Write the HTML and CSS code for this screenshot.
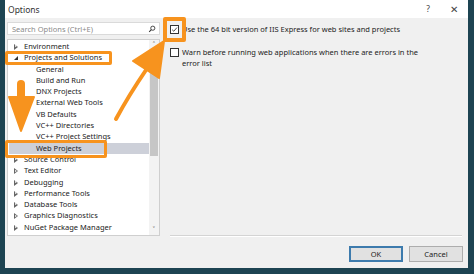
FILE: index.html
```html
<!DOCTYPE html>
<html lang="en">
<head>
  <meta charset="UTF-8" />
  <title>Options</title>
  <link rel="stylesheet" href="styles.css">
</head>
<body>
  <div class="window">
    <div class="titlebar">
      <span class="title">Options</span>
      <span class="title-btns"><span>?</span><span class="close">✕</span></span>
    </div>

    <div class="main">
      <div class="left">
        <div class="search">
          <span>Search Options (Ctrl+E)</span>
          <svg viewBox="0 0 10 10"><circle cx="6" cy="4" r="2.6" fill="none" stroke="#333" stroke-width="1.1"/><path d="M4.2 5.8L1.5 8.5" stroke="#333" stroke-width="1.3"/></svg>
        </div>
        <div class="tree">
          <div class="tree-items">
            <div class="node"><i class="tri"></i>Environment</div>
            <div class="node"><i class="tri open"></i>Projects and Solutions</div>
            <div class="node child">General</div>
            <div class="node child">Build and Run</div>
            <div class="node child">DNX Projects</div>
            <div class="node child">External Web Tools</div>
            <div class="node child">VB Defaults</div>
            <div class="node child">VC++ Directories</div>
            <div class="node child">VC++ Project Settings</div>
            <div class="node child selected">Web Projects</div>
            <div class="node"><i class="tri"></i>Source Control</div>
            <div class="node"><i class="tri"></i>Text Editor</div>
            <div class="node"><i class="tri"></i>Debugging</div>
            <div class="node"><i class="tri"></i>Performance Tools</div>
            <div class="node"><i class="tri"></i>Database Tools</div>
            <div class="node"><i class="tri"></i>Graphics Diagnostics</div>
            <div class="node"><i class="tri"></i>NuGet Package Manager</div>
            <div class="node"><i class="tri"></i>PowerShell Tools</div>
          </div>
          <div class="scrollbar">
            <span class="chev">˄</span>
            <div class="thumb"></div>
            <span class="chev down">˅</span>
          </div>
        </div>
      </div>

      <div class="right">
        <div class="opts">
          <label class="opt"><span class="box checked"><svg viewBox="0 0 8 8"><path d="M1.3 4.2L3.2 6L6.8 1.8" fill="none" stroke="#333" stroke-width="1"/></svg></span><span>Use the 64 bit version of IIS Express for web sites and projects</span></label>
          <label class="opt"><span class="box"></span><span>Warn before running web applications when there are errors in the<br>error list</span></label>
        </div>
      </div>
    </div>

    <div class="footer">
      <button class="btn default">OK</button>
      <button class="btn">Cancel</button>
    </div>

    <!-- annotations -->
    <div class="mark mark-projects"></div>
    <div class="mark mark-web"></div>
    <div class="mark mark-check"></div>
    <svg class="arrows" viewBox="0 0 474 274">
      <path d="M21 84 L21 100" stroke="#f7931e" stroke-width="8" stroke-linecap="round"/>
      <path d="M9 97 L34 97 L21 131 Z" fill="#f7931e" stroke="#f7931e" stroke-width="2" stroke-linejoin="round"/>
      <path d="M116 119 Q129 95 146 70" stroke="#f7931e" stroke-width="4" fill="none" stroke-linecap="round"/>
      <path d="M164 41 L133 61 L159 78 Z" fill="#f7931e" stroke="#f7931e" stroke-width="2" stroke-linejoin="round"/>
    </svg>
  </div>
</body>
</html>
```

FILE: styles.css
```css
body {
  margin: 0;
  background: #1d4452;
  font-family: 'Noto Sans', 'Open Sans', sans-serif;
  font-size: 7.5px;
  color: #222;
  width: 474px;
  height: 274px;
  overflow: hidden;
}

.window {
  position: relative;
  margin-left: 5px;
  width: 463px;
  height: 268px;
  background: #f0f0f0;
  display: flex;
  flex-direction: column;
}

.titlebar {
  height: 18px;
  background: #fff;
  display: flex;
  justify-content: space-between;
  align-items: center;
  padding: 0 10px 0 3px;
}

.title {
  font-size: 8.5px;
  color: #333;
}

.title-btns {
  display: flex;
  gap: 20px;
  font-size: 8.5px;
  color: #444;
}

.title-btns .close {
  font-size: 9.5px;
}

.main {
  display: flex;
  height: 214px;
  padding-top: 4px;
}

.left {
  width: 153px;
  margin-left: 2px;
  display: flex;
  flex-direction: column;
}

.search {
  height: 14px;
  box-sizing: border-box;
  background: #fff;
  border: 1px solid #dadada;
  display: flex;
  align-items: center;
  justify-content: space-between;
  padding: 0 3px 0 4px;
  color: #8a8a8a;
}

.search svg {
  width: 8px;
  height: 8px;
}

.tree {
  margin-top: 4px;
  height: 197px;
  flex: none;
  box-sizing: border-box;
  background: #fff;
  border: 1px solid #cfcfcf;
  display: flex;
  overflow: hidden;
}

.tree-items {
  flex: 1;
  padding-top: 1px;
}

.node {
  height: 11.3px;
  line-height: 11.3px;
  padding-left: 16px;
  position: relative;
  white-space: nowrap;
  color: #222;
}

.node.child {
  padding-left: 28px;
}

.node.selected {
  background: #cdd0d9;
  margin-left: 1px;
  padding-left: 27px;
}

.tri {
  position: absolute;
  left: 6px;
  top: 3px;
  width: 0;
  height: 0;
  border-top: 3px solid transparent;
  border-bottom: 3px solid transparent;
  border-left: 4px solid #666;
}

.tri::after {
  content: "";
  position: absolute;
  left: -3.4px;
  top: -1.7px;
  border-top: 1.7px solid transparent;
  border-bottom: 1.7px solid transparent;
  border-left: 2.2px solid #fff;
}

.tri.open {
  top: 4px;
  left: 6px;
  border: none;
  border-bottom: 4px solid #333;
  border-left: 4px solid transparent;
}

.tri.open::after {
  display: none;
}

.scrollbar {
  width: 10px;
  background: #f3f3f3;
  display: flex;
  flex-direction: column;
  align-items: center;
}

.chev {
  height: 9px;
  line-height: 10px;
  font-size: 8px;
  color: #555;
}

.thumb {
  width: 8px;
  height: 107px;
  background: #c6c6c6;
}

.chev.down {
  margin-top: auto;
  line-height: 8px;
}

.right {
  flex: 1;
  margin: 0 6px 0 10px;
  border-bottom: 1px solid #d4d4d4;
  box-shadow: 0 1px 0 #fff;
}

.opts {
  padding-top: 2px;
  display: flex;
  flex-direction: column;
  gap: 12px;
}

.opt {
  display: flex;
  align-items: flex-start;
  gap: 3px;
  line-height: 11px;
  color: #222;
}

.box {
  flex: none;
  width: 9px;
  height: 9px;
  margin-top: 1px;
  box-sizing: border-box;
  border: 1px solid #333;
  background: #fff;
}

.box svg {
  display: block;
  width: 7px;
  height: 7px;
}

.footer {
  display: flex;
  justify-content: flex-end;
  gap: 6px;
  padding: 10px 5px 0 0;
}

.btn {
  width: 54px;
  height: 16px;
  padding: 0;
  font-family: inherit;
  font-size: 7.5px;
  color: #222;
  background: #e1e1e1;
  border: 1px solid #adadad;
}

.btn.default {
  border: 2px solid #3d7bad;
}

.mark {
  position: absolute;
  border: 3px solid #f7931e;
  border-radius: 2px;
}

.mark-projects {
  left: 0;
  top: 51px;
  width: 101px;
  height: 8px;
}

.mark-web {
  left: 0;
  top: 140px;
  width: 96px;
  height: 12px;
}

.mark-check {
  left: 158px;
  top: 17px;
  width: 15px;
  height: 17px;
  border-width: 4px;
}

.arrows {
  position: absolute;
  left: -5px;
  top: 0;
  width: 474px;
  height: 274px;
  pointer-events: none;
}
```
